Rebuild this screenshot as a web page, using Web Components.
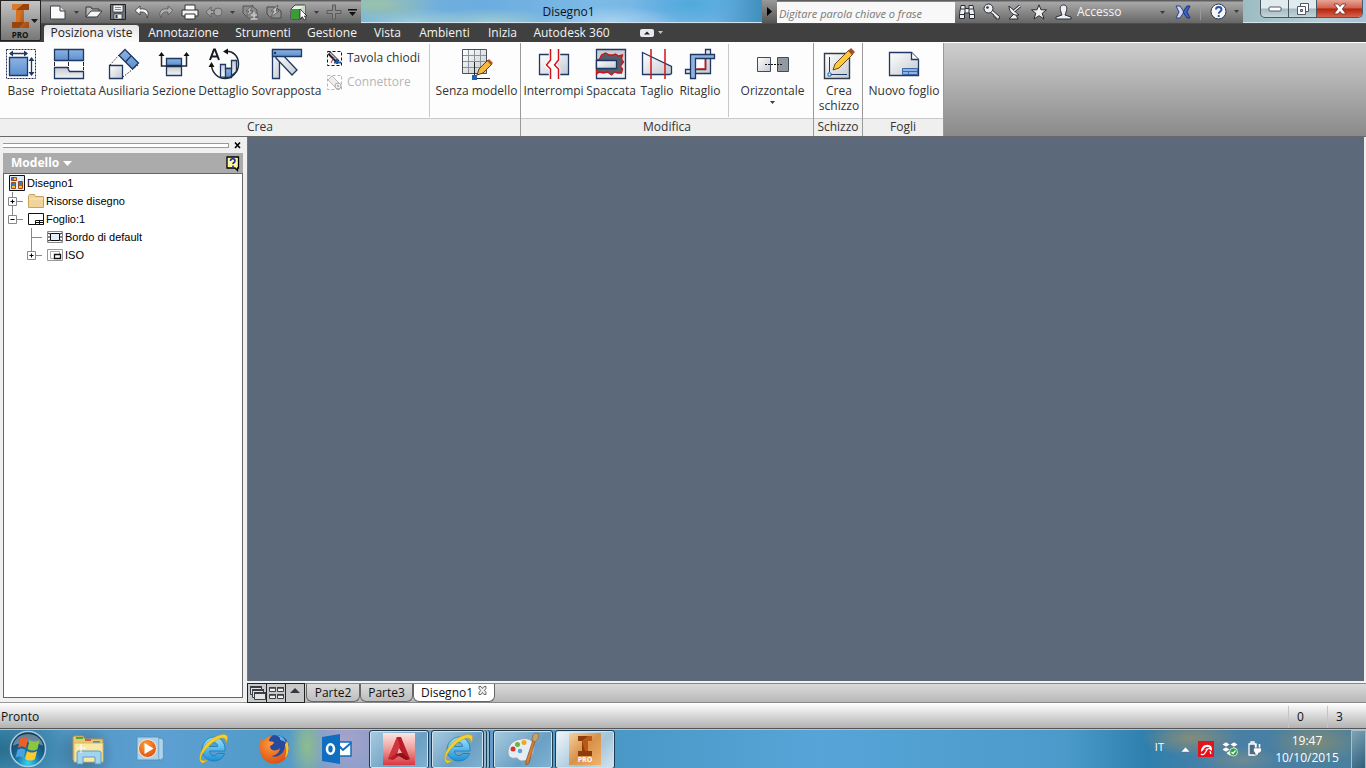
<!DOCTYPE html>
<html lang="it">
<head>
<meta charset="utf-8">
<title>Disegno1</title>
<style>
html, body { margin: 0; height: 100%; }
body { font: 12px/16px "Open Sans", "Noto Sans", sans-serif; color: #222; overflow: hidden; }
</style>
</head>
<body>
<app-shell></app-shell>
<script>
const defs = `<defs>
<linearGradient id="b" x1="0" y1="0" x2="0" y2="1"><stop offset="0" stop-color="#8db4e2"/><stop offset="1" stop-color="#5b8fcf"/></linearGradient>
<linearGradient id="g" x1="0" y1="0" x2="1" y2="1"><stop offset="0" stop-color="#fff"/><stop offset="1" stop-color="#c3c9d0"/></linearGradient>
<linearGradient id="h" x1="0" y1="0" x2="0" y2="1"><stop offset="0" stop-color="#c5c9ce"/><stop offset="1" stop-color="#f4f5f7"/></linearGradient>
<linearGradient id="o" x1="0" y1="0" x2="1" y2="1"><stop offset="0" stop-color="#e08a3a"/><stop offset="1" stop-color="#a5480c"/></linearGradient>
<radialGradient id="orb" cx=".5" cy=".9" r=".8"><stop offset="0" stop-color="#35d4f5"/><stop offset=".45" stop-color="#176f9f"/><stop offset="1" stop-color="#123c5c"/></radialGradient>
<radialGradient id="or" cx=".4" cy=".3" r=".8"><stop offset="0" stop-color="#ff9c3a"/><stop offset="1" stop-color="#d9480f"/></radialGradient>
<linearGradient id="ie" x1="0" y1="0" x2="0" y2="1"><stop offset="0" stop-color="#9be4fb"/><stop offset="1" stop-color="#1d8fd4"/></linearGradient>
<linearGradient id="red" x1="0" y1="0" x2="0" y2="1"><stop offset="0" stop-color="#fbe5e3"/><stop offset=".5" stop-color="#ee9d9b"/><stop offset="1" stop-color="#d8383f"/></linearGradient>
<linearGradient id="tan" x1="0" y1="0" x2="1" y2="1"><stop offset="0" stop-color="#f3d3a0"/><stop offset=".5" stop-color="#d9924a"/><stop offset="1" stop-color="#f3b26c"/></linearGradient>
</defs>`;
const N = 'stroke="#1f3864" stroke-width="1.3"';
const ink = 'fill="none" stroke="#222a38" stroke-width="1.5"';
const caret = c => [7, 4, `<path fill="${c}" d="M0 0h7L3.500 4z"/>`];
const ieArt = `<path d="M28 16c0-7-5-12-11-12S5 10 5 16.500 10 28 17 28c5 0 9-3 10.500-7.500h-7c-.8 1.400-2 2-3.600 2-2.600 0-4.200-1.600-4.400-4.500H28zM12.500 13.500c.4-2.400 1.900-4 4.200-4s3.700 1.600 3.900 4z" fill="url(#ie)" stroke="#1878b8" stroke-width=".8"/><path d="M5 30C-2 25 8 8 20 3c6-2.500 10-2 10.500 1 .3 1.800-.5 4-1.500 6 .2-4-1.500-6-6-4.500C14 9 4 20 4 25.500c0 2.500 3 2.800 6.500 1.500-2.500 2.500-4.500 3.400-5.500 3z" fill="#f5cf2e" stroke="#c79a12" stroke-width=".5"/>`;
const box = '<path d="M4.500 0v5M9 9.500h6" stroke="#888"/><path d="M.5 5.500h8v8h-8z" fill="#fff" stroke="#888"/><path d="M2.500 9.500h4" stroke="#000"/>';
const ICONS = {
 caretWhite: caret('#f2f2f2'), caretBlack: caret('#1a1a1a'),
 caretDark: [5, 3, '<path fill="#3c3c3c" d="M0 0h5L2.500 3z"/>'],
 caretBig: [9, 5, '<path fill="#fff" d="M0 0h9L4.500 5z"/>'],
 more: [9, 7, '<path d="M0 0h9v1.500H0zM1 3h7L4.500 7z" fill="#111"/>'],
 inventor: [26, 28, '<path d="M5 2h17v6h-5v12h5v6H5v-6h4V8H5z" fill="url(#o)"/><path d="M9 8l7-6h6v6zM9 20h8l-5 6H5v-6z" fill="#9a430d"/><path d="M9 8h4v12H9z" fill="#d9701e"/><path d="M5 2h11L9 8H5z" fill="#d57a2e"/>'],
 newDoc: [18, 16, '<path d="M1.500 2h9.500l5 5v8H1.500z" fill="#fafafa" stroke="#3a3f48"/><path d="M11 2v5h5" fill="#ddd" stroke="#3a3f48"/>'],
 open: [18, 16, '<path d="M1 13V3h5l1 2h7v2" fill="#b9b9b9" stroke="#33373f"/><path d="M1 13l5-6h11l-5 6z" fill="#f5f5f5" stroke="#33373f"/>'],
 save: [16, 16, '<path d="M.5.5h15v15H.5z" fill="#6c7480" stroke="#222"/><path d="M3 1h10v7H3zM4 10h8v5H4z" fill="#f2f2f2" stroke="#222" stroke-width=".7"/><path d="M5 3.500h6M5 5.500h6" stroke="#888"/><path d="M5.500 11h2v3h-2z" fill="#333"/>'],
 undo: [16, 16, '<path d="M6 2L1 6.500 6 11V8c5-.5 7 2 7 6 3-6 0-10-7-9z" fill="#f5f5f5" stroke="#333" stroke-width=".8"/>'],
 redo: [16, 16, '<path d="M10 2l5 4.500-5 4.500V8c-5-.5-7 2-7 6-3-6 0-10 7-9z" fill="#b0b0b0" stroke="#555" stroke-width=".8"/>'],
 print: [18, 16, '<path d="M4 1h10v6H4z" fill="#fff" stroke="#333"/><path d="M1 6h16v6H1z" fill="#f2f2f2" stroke="#333"/><path d="M4 10h10v5H4z" fill="#fff" stroke="#333"/>'],
 back: [18, 12, '<path d="M6 1L1 6l5 5V7.500h3v-3H6z" fill="#a4a4a4" stroke="#555" stroke-width=".7"/><circle cx="13" cy="6" r="4" fill="#a4a4a4" stroke="#555" stroke-width=".7"/>'],
 updA: [16, 16, '<path d="M1 2h9l5 4v8H6L1 9z" fill="#8c8c8c" stroke="#555"/><path d="M11 1L4 7h3l-3 6 7-6H8z" fill="#c4c4c4" stroke="#4a4a4a" stroke-width=".7"/><path d="M12 8v7M9 11h6M8.500 15h7" stroke="#c8c8c8" stroke-width="1.500"/>'],
 updB: [16, 16, '<path d="M1 3h8l6 4v7H5l-4-4z" fill="#8f8f8f" stroke="#4a4a4a"/><path d="M12 1L5 7h3l-3 6 8-6h-3z" fill="#c4c4c4" stroke="#4a4a4a" stroke-width=".7"/>'],
 cube: [17, 17, '<path d="M1 5l4-4h10v10l-4 4H1z" fill="#e6efe4" stroke="#39423a"/><path d="M1 5h9v10H1z" fill="#3b9b36"/><path d="M10 5l5-4v10l-5 4z" fill="#c9d8c7"/><path d="M10 5v10l2.300-2.300L14 16l2-1-1.500-3H17z" fill="#fff" stroke="#222" stroke-width=".8"/>'],
 plus: [16, 16, '<path d="M6.500 1h3v5.500H15v3H9.500V15h-3V9.500H1v-3h5.500z" fill="#8c8c8c" stroke="#5a5a5a"/>'],
 playBlack: [5, 9, '<path d="M0 0l5 4.500L0 9z" fill="#000"/>'],
 binoc: [16, 16, '<path d="M2 1.500h4v3h4v-3h4l1.500 8v5h-5V9h-5v5.500h-5v-5z" fill="#eceef2" stroke="#272b33"/><path d="M.5 10.500h5M10.500 10.500h5M6 5v4M10 5v4M2 5h4M10 5h4" stroke="#272b33"/>'],
 key: [17, 17, '<path d="M8 6l8.500 7.500-.5 2.500h-3v-2h-2v-2L7 9z" fill="#eceef2" stroke="#272b33"/><circle cx="5.500" cy="5.500" r="4.500" fill="#eceef2" stroke="#272b33"/><circle cx="4.500" cy="4.500" r="1.300" fill="#333"/>'],
 dish: [16, 16, '<path d="M7 10l-5 5h9l-2-4" fill="#f2f2f2" stroke="#272b33"/><path d="M2 2c0 6 4 10 10 9z" fill="#f2f2f2" stroke="#272b33"/><path d="M7 7l6-5" stroke="#272b33" stroke-width="3"/><path d="M7 7l6-5" stroke="#f2f2f2" stroke-width="1.300"/>'],
 star: [16, 16, '<path d="M8 .8l2 5h5.500l-4.300 3.500L13 15l-5-3.300L3 15l1.800-5.700L.5 5.800H6z" fill="#f1f2f4" stroke="#272b33"/>'],
 user: [17, 16, '<path d="M8.500 1C5 1 5 4 5.500 6.500S7 10 7 11l-6 2v2h15v-2l-6-2c0-1 1-2 1.500-4.500S12 1 8.500 1z" fill="#eef0f3" stroke="#272b33"/>'],
 exch: [16, 14, '<path d="M1 1h4l4 6-4 6H1l3-6z" fill="#d5daea" stroke="#26418c"/><path d="M15 1h-3L8 7l4 6h3l-3-6z" fill="#3563c9" stroke="#1c3479"/>'],
 help: [17, 17, '<circle cx="8.500" cy="8.500" r="7.500" fill="#f5f7fb" stroke="#30343c"/><path d="M6 6.500C6 3.200 11.500 3.200 11.500 6.500c0 2-2.800 1.900-2.800 4.300M8.700 12v2" fill="none" stroke="#2c4fae" stroke-width="1.900"/>'],
 min: [14, 8, '<rect x="1" y="2" width="12" height="4" rx="1" fill="#fff" stroke="#525866"/>'],
 restore: [14, 14, '<path d="M4.500 1.500h8v8h-8z" fill="#fff" stroke="#525866"/><path d="M1.500 4.500h8v8h-8z" fill="#fff" stroke="#525866"/><path d="M4.500 7.500h2v2h-2z" fill="#9bb" stroke="#525866"/>'],
 closeW: [14, 12, '<path d="M1 1h4l2 2.500L9 1h4L9.300 6l3.700 5H9L7 8.500 5 11H1l3.700-5z" fill="#fff" stroke="#6b3a3a" stroke-width=".9"/>'],
 pill: [14, 8, '<rect width="14" height="8" rx="2" fill="#e8e8f0"/><path d="M4 5.500h6L7 2.500z" fill="#222"/>'],
 base: [32, 32, `<path d="M1.500 1.500h29v29h-29z" fill="none" stroke="#222c48" stroke-dasharray="2 1"/><path d="M4.500 9.500h18v18h-18z" fill="url(#b)" ${N}/><path d="M5 5.500h17M26.500 10v17" ${N}/><path d="M4 5.500l4-3v6zM23 5.500l-4-3v6zM26.500 9l-3 4h6zM26.500 28l-3-4h6z" fill="#1f3864"/>`],
 proj: [32, 32, `<path d="M1.500 1.500h14v11h-14zM15.500 1.500h15v11h-15z" fill="url(#b)" ${N}/><path d="M1.500 19.500h13l2 4h14v7h-29z" fill="url(#h)" ${N}/><path d="M1.500 14v4M15.500 14v6M30.500 14v8" stroke="#222" stroke-dasharray="4 1"/>`],
 aux: [32, 32, `<path d="M11 7L2 17M30 17L15 29" stroke="#222" stroke-dasharray="1.500 1.500"/><path d="M17 1.500L30.500 15l-6 6L11 7.500z" fill="url(#b)" ${N}/><path d="M23 8l-5.500 6" ${N}/><path d="M1.500 17.500h13v13h-13z" fill="url(#g)" ${N}/>`],
 sect: [32, 32, `<path d="M8.500 10.500h15v7h-15z" fill="url(#b)" ${N}/><path d="M8.500 18.500h15v9h-15z" fill="url(#h)" ${N}/><path d="M3.500 6v12h25V6" ${ink}/><path d="M.5 8l3-4 3 4zM25.500 8l3-4 3 4z" fill="#111"/>`],
 detail: [32, 32, `<path d="M12.500 29V16.500h5v4h6v-8h5v11l-7 6z" fill="url(#h)" ${N}/><path d="M17.500 20.500h6v9h-6z" fill="url(#b)" ${N}/><path d="M17 3.500c8-1 13.500 4.500 13.500 12.500S24 30.500 17 30.500 4 25 3.500 17" ${ink}/><path d="M15 3.500l5-3v6zM3.500 14l-3 5h6z" fill="#111"/><path d="M2 12L6 1.500h1L11 12M3.500 8.500h6" fill="none" stroke="#161a22" stroke-width="2"/>`],
 over: [32, 32, `<path d="M1.500 2.500h7v28h-7z" fill="url(#g)" ${N}/><path d="M5 8l5-3 16 17-5 5L5 10z" fill="url(#g)" ${N}/><path d="M1.500 1.500h29v7h-29z" fill="url(#b)" ${N}/><circle cx="4" cy="5" r="1.200" fill="#1f3864"/>`],
 nails: [17, 17, '<path d="M1.500 1.500h14v14h-14z" fill="none" stroke="#111" stroke-dasharray="3 2"/><path d="M3 3l9 9" stroke="#222" stroke-width="4"/><path d="M4 3l7 7" stroke="#b9c6d8" stroke-width="1.500"/><path d="M8 7l-3 6" stroke="#c22"/><path d="M11 9v5M8 12.500h7" stroke="#1c57a8" stroke-width="2"/>'],
 conn: [17, 17, '<path d="M1.500 1.500h14v14h-14z" fill="none" stroke="#b5b5b5" stroke-dasharray="3 2"/><path d="M2 6l4-4 7 7-4 4z" fill="#eee" stroke="#bbb"/><circle cx="12" cy="12" r="3" fill="#eee" stroke="#aaa"/><circle cx="12" cy="12" r="1" fill="#aaa"/>'],
 grid: [32, 32, '<path d="M1.500 1.500h24v24h-24z" fill="url(#g)" stroke="#4b505a"/><path d="M7.500 2v23M13.500 2v23M19.500 2v23M2 7.500h23M2 13.500h23M2 19.500h23" stroke="#8c9198"/><path d="M13.500 14v14M15 30.500h14" stroke="#222"/><path d="M11 27h5v5h-5z" fill="#1c66b5"/><path d="M16 27l2-6 9-9 4 4-9 9z" fill="#f5b83c" stroke="#5b421c"/><path d="M26 13l2-2 4 4-2 2z" fill="#b0522c"/>'],
 brk: [32, 32, `<path d="M12.500 6.500h-11v20h11v-5l-4-4 4-5zM20.500 6.500h10v20h-10v-5l-4-4 4-5z" fill="url(#g)" ${N}/><path d="M12.500 1v11l-4 5 4 4v10M20.500 1v11l-4 5 4 4v10" fill="none" stroke="#fff" stroke-width="3.500"/><path d="M12.500 1v11l-4 5 4 4v10M20.500 1v11l-4 5 4 4v10" fill="none" stroke="#d3131b" stroke-width="1.500"/>`],
 brkout: [32, 32, `<path d="M1.500 1.500h29v29h-29z" fill="url(#h)" ${N}/><path d="M1.500 12l3-1 2-4 4-2 4 2 3 0 3-1 3 2 4-1-1 4 2 3-3 4 2 3-1 4-4 0-3-1-3 3-4-3-4 1-4-1-3 2z" fill="#555b67" stroke="#c9161d" stroke-width="1.300"/><path d="M1.500 12.500h20v8h-20z" fill="url(#g)" ${N}/>`],
 slice: [32, 32, `<path d="M1.500 4.500l29 14v7l-2 1h-27z" fill="url(#g)" ${N}/><path d="M10 1v30M24 1v30" stroke="#d3131b" stroke-width="1.500"/>`],
 crop: [32, 32, `<path d="M21.500 1.500h5v24h-25v-4h20z" fill="url(#g)" ${N}/><path d="M6.500 6.500h24v4h-19v20h-5z" fill="#8fb3de" ${N}/><path d="M21.500 11v10h-9" fill="none" stroke="#c9161d" stroke-width="1.700"/>`],
 horiz: [32, 32, '<path d="M.5 9.500h13v14H.5z" fill="url(#g)" stroke="#444b57"/><path d="M20.500 9.500h11v14h-11z" fill="#9299a2" stroke="#444b57"/><path d="M8 16.500h18" stroke="#111" stroke-dasharray="2 1"/>'],
 sketch: [32, 32, '<path d="M1.500 5.500h25v25h-25z" fill="url(#g)" stroke="#333b48" stroke-width="1.400"/><path d="M6.500 9v15M8 26.500h16" stroke="#1f3864"/><path d="M5 25h3v3H5z" fill="#fff" stroke="#1c66b5"/><path d="M10 22l2-6L26 2l4 4-14 14z" fill="#fbc93a" stroke="#6a4a12"/><path d="M25 3l3-3 4 4-3 3z" fill="#a34a35"/>'],
 sheet: [32, 32, `<path d="M1.500 4.500h22l7 7v16h-29z" fill="url(#g)" ${N}/><path d="M23.500 4.500v7h7" fill="#fff" ${N}/><path d="M14.500 20.500h15v6h-15zM14.500 23.500h15M20.500 23.500v3" fill="#8fb3de" stroke="#3b69ac"/>`],
 closeS: [8, 7, '<path d="M1 .5l5 5.500M6 .5L1 6" stroke="#000" stroke-width="1.600" fill="none"/>'],
 helpY: [14, 15, '<path d="M1 1h11.500v11h-1v2.500L9 12H1z" fill="#fbf6a0" stroke="#000" stroke-width="1.300"/><path d="M4.500 5c0-3 4.500-3 4.500 0 0 1.500-2 1.500-2 3M7 9.500V11" fill="none" stroke="#1a1f9c" stroke-width="1.600"/>'],
 tDoc: [16, 16, '<path d="M.5.5h15v15H.5z" fill="#dfeaf6" stroke="#111"/><path d="M2.500 2.500h5v3h-5z" fill="#3a7dc0" stroke="#a04416"/><path d="M2.500 7.500h4v6h-4zM9.500 6.500h4v7h-4z" fill="#3a7dc0" stroke="#a04416"/><path d="M3 11h3v2H3zM10 11h3v2h-3zM5 3h2v2H5z" fill="#f5c531"/>'],
 tFolder: [16, 16, '<path d="M.5 14.500v-12l1-1h5l1 2h8v11z" fill="#f0d49a" stroke="#c9a25c"/><path d="M1 6h14" stroke="#f9e8c2"/>'],
 tSheet: [16, 16, '<path d="M.5 2.500h15v11H.5z" fill="#fff" stroke="#111"/><path d="M7.500 9.500h8v4h-8zM7 11.500h8M11.500 10v4" stroke="#111" fill="#fff"/>'],
 tBorder: [16, 16, '<path d="M.5 2.500h15v11H.5z" fill="#fff" stroke="#888"/><path d="M3.500 4.500h9v7h-9z" fill="#e3eefa" stroke="#111"/><path d="M1 4l2 1M15 4l-2 1M1 12l2-1M15 12l-2-1M1 8h2M13 8h2" stroke="#111"/>'],
 tIso: [16, 16, '<path d="M.5 2.500h15v11H.5z" fill="#fff" stroke="#999"/><path d="M3.500 4.500h9v7h-9z" fill="#fff" stroke="#aaa"/><path d="M7.500 7.500h6v4h-6z" fill="#fff" stroke="#111" stroke-width="1.300"/>'],
 exPlus: [20, 18, box + '<path d="M4.500 7.500v4" stroke="#000"/>'],
 exPlusDown: [20, 18, box + '<path d="M4.500 7.500v4" stroke="#000"/><path d="M4.500 14v4" stroke="#888"/>'],
 exMinus: [20, 18, box],
 exLine: [20, 18, '<path d="M4.500 0v18M5 9.500h10" stroke="#888"/>'],
 cascade: [17, 16, ['M1.500 2.500h11v7h-11z', 'M3.500 5.500h11v7h-11z', 'M5.500 8.500h11v6h-11z'].map((d, i) => `<path d="${d}" fill="#e4e4e4" stroke="#3b4048"/><path d="M${1 + 2 * i} ${2 + 3 * i}h12" stroke="#3b4048" stroke-width="2"/>`).join('')],
 tile: [17, 16, '<path d="M1.500 2.500h6v4h-6zM9.500 2.500h6v4h-6zM1.500 9.500h6v4h-6zM9.500 9.500h6v4h-6z" fill="#eee" stroke="#3b4048"/><path d="M1 3h7M9 3h7M1 10h7M9 10h7" stroke="#3b4048" stroke-width="1.400"/>'],
 up: [10, 12, '<path d="M0 6h10L5 1z" fill="#333a42"/>'],
 closeTab: [9, 9, '<path d="M1 .5h2l1.500 2L6 .5h2v2L6.500 4.500 8 6.500v2H6l-1.500-2-1.500 2H1v-2l1.500-2L1 2.500z" fill="#eee" stroke="#666"/>'],
 orb: [38, 38, '<circle cx="19" cy="19" r="17.500" fill="url(#orb)" stroke="#a9c9dc" stroke-width="1.500"/><path d="M4 16C6 0 32 0 34 16c-9-5-21-5-30 0z" fill="#fff" opacity=".35"/><path d="M11 9c3-2 5-2 8 0l-2 9c-3-2-5-2-8 0z" fill="#e9602a"/><path d="M20.500 10c3 2 6 2 10 0l-2 9c-3 2-6 2-10 0z" fill="#8cc63e"/><path d="M8.500 20c3-2 5-2 8 0l-2 8c-3-2-5-2-8 0z" fill="#4aa3e0"/><path d="M18 21c3 2 6 2 10 0l-2 8c-3 2-6 2-10 0z" fill="#fccb2f"/>'],
 explorer: [34, 34, '<path d="M1 8V5l1-1h9l2 3h18v21H1z" fill="#e8c971" stroke="#b6914a"/><path d="M4 5h7v2H4z" fill="#4aa83c"/><path d="M13 7h6v2h-6z" fill="#d35a3a"/><path d="M21 9h7v2h-7z" fill="#3d9ad6"/><path d="M2 11h29v19H2z" fill="#f9e8a4" stroke="#cfae5a" stroke-width=".8"/><path d="M5 32V21q0-2 2-2h20q2 0 2 2v11h-6v-7H11v7z" fill="#a3d4ee" stroke="#5d9cc4"/><path d="M9 12v9M5 16h9" stroke="#fff"/>'],
 wmp: [30, 28, '<path d="M4 3h23v22H4z" fill="#86bfe2" stroke="#5b93b9"/><path d="M1 2h22v23H1z" fill="#a9d3ec" stroke="#5b93b9"/><path d="M24 4v20M26 5v18" stroke="#d5ecf8"/><circle cx="11.500" cy="13.500" r="9" fill="url(#or)" stroke="#fbe6d0"/><path d="M8.500 8l9 5.500-9 5.500z" fill="#fff"/>'],
 ie: [32, 32, ieArt],
 firefox: [32, 32, '<circle cx="17" cy="15" r="13" fill="#27499e"/><path d="M16 2c7 0 10 4 11 8-3-3-6-3-6-3s2-3-5-5z" fill="#5fb3e4"/><path d="M2 4c0 2 1 3 2 4 2-3 6-5 9-5-2 2-3 3-3 5l5 1c0 3-4 3-4 5 1 5 8 4 10 1-1 8-9 8-9 8 8 3 15-4 14-13 7 8 1 20-9 20.500C7 31 1 25 1 16 1 11 1 7 2 4z" fill="url(#or)"/><path d="M28 8c3 6 2 13-2 17 1-4 2-9 0-13z" fill="#fbc02d"/>'],
 outlook: [32, 32, '<path d="M14 9h16v14H14z" fill="#fff" stroke="#0f6ec0" stroke-width="1.500"/><path d="M15 10l7 7 8-7" fill="none" stroke="#0f6ec0" stroke-width="2"/><path d="M1 4l18-3v30L1 28z" fill="#0f6ec0"/><ellipse cx="9.500" cy="16" rx="3.500" ry="4.700" fill="none" stroke="#fff" stroke-width="2.600"/>'],
 acad: [32, 32, '<path d="M0 0h32v32H0z" fill="url(#red)"/><path d="M14 4h4l9 22-4 1-7-4-6 4-5-1z" fill="#b81c26"/><path d="M14 4l3 9-4 8-8 5z" fill="#d2343c"/><path d="M16 15l3 5-5 1z" fill="#efb4b0"/><path d="M12 21l7-1 8 6-4 1-7-4z" fill="#8e1019"/>'],
 paint: [32, 34, '<path d="M14 7c9-2 14 3 13 10-1 8-6 12-12 12-4 0-3-3-6-3-5 1-8-1-8-6C1 13 6 8 14 7z" fill="#e3edf3" stroke="#8da7b8"/><circle cx="6" cy="17" r="2.500" fill="#d9342b"/><circle cx="10.500" cy="12.500" r="2.500" fill="#6cb53a"/><circle cx="17" cy="10.500" r="2.500" fill="#f3a623"/><circle cx="13" cy="19" r="2.300" fill="#5ea3cf"/><path d="M26 8l2 1-6 22-3 2 0-4z" fill="#d6813a" stroke="#8c4c1c" stroke-width=".7"/><path d="M26 3l2-2 4 1-1 5-3 3-3-2z" fill="#c8a06a" stroke="#8c6a3c" stroke-width=".7"/>'],
 invBig: [32, 32, '<path d="M0 0h32v32H0z" fill="url(#tan)"/><path d="M9 3h14v5h-4v10h4v5H9v-5h4V8H9z" fill="#8f3d0a"/><path d="M13 8l6-5h4v5h-4v10h-3z" fill="#b85a16"/>'],
 chevUp: [9, 5, '<path d="M0 5h9L4.500 0z" fill="#fff" stroke="#456" stroke-width=".4"/>'],
 avira: [16, 16, '<path d="M0 0h16v16H0z" fill="#e2131b"/><path d="M3 11C3 5 8 2 13 5c1 2 1 3 1 5-2-2-4-2-5-1-2-1-4 0-6 2z" fill="#fff"/><path d="M5 10c1-4 4-5 7-3-3 0-5 1-7 3z" fill="#e2131b"/><path d="M9.500 8L7 12c-1 2-3 2-4 1M12 10l1 3" fill="none" stroke="#fff" stroke-width="1.300"/>'],
 dropbox: [17, 16, '<path d="M4 1l4 2.500L4 6 0 3.500zM12 1l4 2.500L12 6 8 3.500zM4 6l4 2.500L4 11 0 8.500zM12 6l4 2.500-4 2.500-4-2.500zM8 9.500l4 2.500-4 3-4-3z" fill="#fff" stroke="#456"  stroke-width=".4"/><circle cx="11.500" cy="11" r="4" fill="#2fa03c" stroke="#fff" stroke-width=".7"/><path d="M9.500 11l1.500 1.500 2.500-3" fill="none" stroke="#fff" stroke-width="1.200"/>'],
 plug: [16, 16, '<path d="M2 3h7v11H2zM4 1h3v2H4z" fill="#4b6c82" stroke="#fff" stroke-width="1.300"/><path d="M8.500 3v4M12.500 3v4" stroke="#fff" stroke-width="1.500"/><path d="M6.500 7h8v3l-2 2h-1v2H8v-2l-1.500-2z" fill="#fff" stroke="#345" stroke-width=".5"/>']
};

const make = (tag, css, html) => customElements.define(tag, class extends HTMLElement {
  connectedCallback() {
    if (this.shadowRoot) return;
    const t = document.createElement('template');
    t.innerHTML = `<style>*{box-sizing:border-box}button{font:inherit;color:inherit;background:none;border:0;padding:0;margin:0}${css}</style>` + (typeof html === 'function' ? html(this) : html);
    this.attachShadow({ mode: 'open' }).append(t.content.cloneNode(true));
  }
});

make('ui-icon', ':host{display:block;flex:none}svg{display:block;overflow:visible}', el => {
  const [w, h, art] = ICONS[el.getAttribute('name')];
  return `<svg width="${w}" height="${h}" viewBox="0 0 ${w} ${h}" aria-hidden="true">${defs}${art}</svg>`;
});

make('tool-button', ':host{display:block;flex:none;width:24px}:host([narrow]){width:12px}button{width:100%;height:24px;display:grid;place-items:center}',
  el => `<button type="button" aria-label="${el.getAttribute('label')}"><ui-icon name="${el.getAttribute('icon')}"></ui-icon></button>`);

make('window-controls', `:host{display:block;width:123px;padding-left:17px;background:linear-gradient(90deg,#9cbcc2,#b4cfd4 60%,#a4c4dc);border-bottom:1px solid #d5e4ea}
 div{display:flex;width:103px;height:18px;border:1px solid #4a5864;border-top:0;border-radius:0 0 5px 5px;overflow:hidden;background:linear-gradient(#e0ebee 0 48%,#a3bac2 52%,#c4d5da)}
 button{width:28px;display:grid;place-items:center;border-right:1px solid #4a5864}
 button:last-child{flex:1;border:0;background:linear-gradient(#e8a596,#d0604a 48%,#b5220c 52%,#d8624a)}`,
 `<div><button type="button" aria-label="Riduci"><ui-icon name="min"></ui-icon></button><button type="button" aria-label="Ripristina"><ui-icon name="restore"></ui-icon></button><button type="button" aria-label="Chiudi"><ui-icon name="closeW"></ui-icon></button></div>`);

make('title-bar', `:host{display:flex;height:24px;background:linear-gradient(#5e5e5e 0 1px,#a8a8a8 2px,#666);border-bottom:1px solid #4c4c4c}
 .qat{display:flex;width:320px;padding-left:5px}
 .title{flex:1;display:grid;place-items:center;padding:2px 0 0 14px;color:#111;border-bottom:1px solid #cfe2ee;
  background:radial-gradient(60px 16px at 4% 20%,#9cc2a8,transparent),radial-gradient(70px 14px at 32% 100%,#9dcbd0,transparent),radial-gradient(60px 14px at 13% 100%,#9dcbd6,transparent),radial-gradient(70px 16px at 62% 100%,#a8d2f0,transparent),radial-gradient(60px 20px at 82% 20%,#4faadc,transparent),linear-gradient(90deg,#7ab6d8,#6bace0 30%,#7cbae6 60%,#6db0e4 88%,#3f90bc)}
 .go{width:15px;display:grid;place-items:center;background:linear-gradient(#999,#555)}
 input{width:178px;height:21px;margin-top:2px;border:0;border-radius:0;padding:2px 2px 0;background:#f8f8f8;font:italic 11px/16px "Open Sans","Noto Sans",sans-serif;outline:0}
 input::placeholder{color:#777;opacity:1}
 .info{display:flex;align-items:center;width:288px}
 .login{width:96px;display:flex;align-items:center;justify-content:space-between;color:#f4f4f4;padding:1px 6px 0 2px}
 i{width:1px;height:16px;background:#999;margin:0 5px}`,
 `<nav class="qat" aria-label="Accesso rapido">${[['newDoc','Nuovo'],['caretDark','Altro',1],['open','Apri'],['save','Salva'],['undo','Annulla'],['redo','Ripeti'],['print','Stampa'],['back','Torna'],['caretDark','Altro',1],['updA','Aggiorna'],['updB','Aggiorna foglio'],['cube','Selezione'],['caretDark','Altro',1],['plus','Aggiungi'],['more','Personalizza',1]].map(a => `<tool-button icon="${a[0]}" label="${a[1]}" ${a[2] ? 'narrow' : ''}></tool-button>`).join('')}</nav>
 <div class="title"><span>Disegno1</span></div>
 <button type="button" class="go" aria-label="Mostra ricerca"><ui-icon name="playBlack"></ui-icon></button>
 <input type="text" aria-label="Ricerca" placeholder="Digitare parola chiave o frase">
 <div class="info"><tool-button icon="binoc" label="Cerca"></tool-button><tool-button icon="key" label="Abbonamento"></tool-button><tool-button icon="dish" label="Comunicazioni"></tool-button><tool-button icon="star" label="Preferiti"></tool-button><tool-button icon="user" label="Utente"></tool-button><button type="button" class="login"><span>Accesso</span><ui-icon name="caretDark"></ui-icon></button><tool-button icon="exch" label="Exchange"></tool-button><i></i><tool-button icon="help" label="Guida"></tool-button><tool-button icon="caretDark" label="Altro" narrow></tool-button></div>
 <window-controls></window-controls>`);

make('menu-tab', `:host{display:block;flex:none}button{width:100%;height:17px;color:#f4f4f4;line-height:15px;white-space:nowrap;display:flex;justify-content:center;align-items:flex-start}
 :host([active]) button{background:linear-gradient(#e4e4e4,#fdfdfd);color:#222;border-radius:3px 3px 0 0}`,
 '<button type="button" role="tab"><slot></slot></button>');

make('menu-bar', `:host{display:flex;background:#404040;height:18px;padding:1px 0 0 3px}.min{display:flex;align-items:center;gap:4px;margin:0 0 2px 22px}`,
 `${[['Posiziona viste',95],['Annotazione',89],['Strumenti',70],['Gestione',68],['Vista',43],['Ambienti',71],['Inizia',45],['Autodesk 360',93]].map((a, i) => `<menu-tab style="width:${a[1]}px" ${i ? '' : 'active'}>${a[0]}</menu-tab>`).join('')}<button type="button" class="min" aria-label="Riduci barra multifunzione"><ui-icon name="pill"></ui-icon><ui-icon name="caretDark" style="filter:invert(1)"></ui-icon></button>`);

make('app-menu', `:host{display:block;background:#404040}button{width:41px;height:41px;display:grid;grid-template-columns:30px 1fr;align-items:center;border:1px solid #222;border-radius:0 0 2px 0;background:linear-gradient(#c4c4c4,#777)}
 .logo{display:grid;justify-items:center;padding-left:6px}b{font-size:8px;line-height:9px;color:#111}`,
 '<button type="button" aria-label="Menu applicazione"><span class="logo"><ui-icon name="inventor"></ui-icon><b>PRO</b></span><ui-icon name="caretBlack"></ui-icon></button>');

make('ribbon-button', `:host{display:block;flex:none}button{width:100%;display:flex;flex-direction:column;align-items:center;text-align:center;white-space:nowrap;line-height:15px;color:#333}
 span{margin-top:3px}.m{margin-top:3px}`,
 el => `<button type="button"><ui-icon name="${el.getAttribute('icon')}"></ui-icon><span><slot></slot></span>${el.hasAttribute('menu') ? '<ui-icon class="m" name="caretDark"></ui-icon>' : ''}</button>`);

make('ribbon-small', `:host{display:block}button{display:flex;align-items:center;gap:4px;height:24px;color:#333;white-space:nowrap}button:disabled{color:#b5b5b5}`,
 el => `<button type="button" ${el.hasAttribute('off') ? 'disabled' : ''}><ui-icon name="${el.getAttribute('icon')}"></ui-icon><slot></slot></button>`);

make('ribbon-panel', `:host{display:grid;grid-template-rows:1fr 18px;background:#fdfdfd;border-right:1px solid #9a9a9a}
 .tools{display:flex;padding:5px 0 0 2px}footer{background:#efefef;border-top:1px solid #c8c8c8;text-align:center;line-height:16px;color:#333}`,
 el => `<div class="tools"><slot></slot></div><footer>${el.getAttribute('label')}</footer>`);

make('ribbon-bar', `:host{display:flex;height:95px;background:linear-gradient(#cecece,#8a8a8a);border-top:1px solid #fff;border-bottom:1px solid #686868}
 .col{width:102px;padding:0 0 0 3px;margin-top:-2px}i{width:1px;height:73px;margin:-4px 3px 0 4px;background:#c8c8c8}`,
 (() => { const b = (icon, w, t, x = '') => `<ribbon-button icon="${icon}" style="width:${w}px" ${x}>${t}</ribbon-button>`;
 return `<ribbon-panel label="Crea">${b('base',38,'Base')}${b('proj',57,'Proiettata')}${b('aux',54,'Ausiliaria')}${b('sect',46,'Sezione')}${b('detail',53,'Dettaglio')}${b('over',73,'Sovrapposta')}<div class="col"><ribbon-small icon="nails">Tavola chiodi</ribbon-small><ribbon-small icon="conn" off>Connettore</ribbon-small></div><i></i>${b('grid',87,'Senza modello')}</ribbon-panel>
 <ribbon-panel label="Modifica">${b('brk',61,'Interrompi')}${b('brkout',54,'Spaccata')}${b('slice',38,'Taglio')}${b('crop',48,'Ritaglio')}<i></i>${b('horiz',81,'Orizzontale','menu')}</ribbon-panel>
 <ribbon-panel label="Schizzo">${b('sketch',46,'Crea<br>schizzo')}</ribbon-panel>
 <ribbon-panel label="Fogli">${b('sheet',78,'Nuovo foglio')}</ribbon-panel>`; })());

make('tree-row', `:host{display:flex;align-items:center;height:18px;white-space:nowrap;color:#000}button{cursor:default}span{margin-left:2px}`,
 el => `${el.hasAttribute('twist') ? `<button type="button" aria-label="Espandi"><ui-icon name="${el.getAttribute('twist')}"></ui-icon></button>` : ''}<ui-icon name="${el.getAttribute('icon')}"></ui-icon><span><slot></slot></span>`);

make('model-browser', `:host{display:flex;flex-direction:column;width:247px;padding:6px 4px 4px 3px;background:#f0f0f0;border-bottom:1px solid #999;font:11px/16px "Liberation Sans",Tahoma,sans-serif}
 .grip{display:flex;align-items:center;gap:5px;height:5px;margin-bottom:5px}.grip span{width:226px;height:5px;border:1px solid #999;border-left:0;background:#fff}
 header{display:flex;align-items:center;justify-content:space-between;height:20px;background:#ababab;color:#fff;padding:0 3px 0 8px;width:240px}
 header button{display:flex;align-items:center;gap:4px;font:bold 12px/18px "Noto Sans","Open Sans",sans-serif}
 .box{flex:1;width:240px;border:1px solid #666;background:#fff}
 ul{list-style:none;margin:0;padding:0 0 0 4px}ul ul{padding-left:19px}.root{padding-left:5px}`,
 `<div class="grip"><span></span><button type="button" aria-label="Chiudi pannello"><ui-icon name="closeS"></ui-icon></button></div>
 <header><button type="button">Modello<ui-icon name="caretBig"></ui-icon></button><button type="button" aria-label="Guida"><ui-icon name="helpY"></ui-icon></button></header>
 <div class="box"><tree-row class="root" icon="tDoc">Disegno1</tree-row><ul><li><tree-row twist="exPlusDown" icon="tFolder">Risorse disegno</tree-row></li><li><tree-row twist="exMinus" icon="tSheet">Foglio:1</tree-row><ul><li><tree-row twist="exLine" icon="tBorder">Bordo di default</tree-row></li><li><tree-row twist="exPlus" icon="tIso">ISO</tree-row></li></ul></li></ul></div>`);

make('doc-tab', `:host{display:block;flex:none}button{width:100%;height:18px;display:flex;align-items:center;justify-content:center;gap:5px;color:#111;line-height:16px;background:linear-gradient(#dcdcdc,#bdbdbd);border:1px solid #666;border-top:0;border-radius:0 0 6px 6px;white-space:nowrap}
 :host([active]) button{background:#fff}ui-icon{margin-bottom:5px}`,
 el => `<button type="button" role="tab"><slot></slot>${el.hasAttribute('active') ? '<ui-icon name="closeTab"></ui-icon>' : ''}</button>`);

make('drawing-area', `:host{display:flex;flex-direction:column;min-width:0;padding-right:2px;background:#eee}
 main{flex:1;background:#5b697b;border-left:1px solid #777}
 footer{display:flex;height:22px;margin-right:-2px;border-top:2px solid #f2f2f2;border-bottom:1px solid #888;background:linear-gradient(#888 0 1px,#dadada 1px,#b8b8b8)}
 .v{width:20px;height:20px;border:1px solid #222;display:grid;place-items:center;background:#c8c8c8}.v+.v{margin-left:-1px}.tabs{display:flex;padding:1px 0 0 1px}`,
 `<main></main><footer><button type="button" class="v" aria-label="Sovrapponi"><ui-icon name="cascade"></ui-icon></button><button type="button" class="v" aria-label="Affianca"><ui-icon name="tile"></ui-icon></button><button type="button" class="v" aria-label="Elenco"><ui-icon name="up"></ui-icon></button><div class="tabs"><doc-tab style="width:54px">Parte2</doc-tab><doc-tab style="width:53px">Parte3</doc-tab><doc-tab style="width:82px" active>Disegno1</doc-tab></div></footer>`);

make('status-bar', `:host{display:flex;align-items:center;height:26px;padding:2px 0 0 1px;background:linear-gradient(#fff,#b2b2b2);color:#111;border-bottom:1px solid #555;box-sizing:border-box}
 span{flex:1}b{font-weight:400;width:39px;height:22px;line-height:22px;padding-left:8px;border-left:1px solid #c4c4c4}`,
 '<span>Pronto</span><b>0</b><b>3</b>');

make('task-button', `:host{display:block;flex:none;width:60px;height:39px}button{width:100%;height:39px;display:grid;place-items:center;position:relative}
 :host([open]) button{border:1px solid #1d3c50;border-radius:3px;box-shadow:inset 0 0 0 1px #cfe3ee;background:linear-gradient(135deg,#a9cbe0,#6ba0c4 60%,#7fb2d2)}
 :host([current]) button{background:linear-gradient(135deg,#f2f7fa,#a3c4da 60%,#d5e6f0)}
 :host([stack]) button{width:53px;box-shadow:inset 0 0 0 1px #cfe3ee,2px 0 0 #8fb9d2,3px 0 0 #1d3c50,5px 0 0 #8fb9d2,6px 0 0 #1d3c50}
 small{position:absolute;bottom:4px;left:0;right:0;font:bold 7px/8px "Open Sans",sans-serif;color:#fff;text-align:center}`,
 el => `<button type="button" aria-label="${el.getAttribute('label')}"><ui-icon name="${el.getAttribute('icon')}"></ui-icon>${el.hasAttribute('current') ? '<small>PRO</small>' : ''}</button>`);

make('task-bar', `:host{display:flex;height:39px;align-items:center;overflow:hidden;color:#fff;border-top:1px solid #a9c8d8;
  background:radial-gradient(80px 40px at 0 50%,#286f8f,transparent),radial-gradient(30px 30px at 85px 24px,#3f7090,transparent),radial-gradient(18px 40px at 307px 16px,#8cbd8c,transparent),radial-gradient(50px 50px at 345px 12px,#a9a3cc,transparent),radial-gradient(50px 18px at calc(100% - 175px) 8px,#858c78,transparent),radial-gradient(40px 14px at calc(100% - 125px) 30px,#6f8a92,transparent),radial-gradient(48px 22px at calc(100% - 50px) 12px,#7d8b78,transparent),linear-gradient(90deg,#4a93bd,#5d9fd2 12%,#4f9bc8 20%,#7f9cc8 27%,#4a98c6 45%,#57a5d8 60%,#4b9aca 78%,#2e7fae 84%,#4680a8 88%,#4a7f9e 100%)}
 .apps{display:flex;gap:2px;flex:1}
 .tray{display:flex;align-items:center;gap:8px}.ct{text-align:center;line-height:17px;width:72px}
 .desk{width:15px;height:39px;border:1px solid #a5c0cc;background:linear-gradient(135deg,#7fa5b5,#2e5f7c)}
 .lang{margin:0 9px 5px 0;font-size:11px}`,
 `<nav class="apps" aria-label="Applicazioni"><task-button style="width:55px;margin-right:2px" icon="orb" label="Start"></task-button>
 ${[['explorer','Esplora risorse',''],['wmp','Media Player',''],['ie','Internet Explorer',''],['firefox','Firefox',''],['outlook','Outlook',''],['acad','AutoCAD','open'],['ie','Internet Explorer','open stack'],['paint','Paint','open'],['invBig','Inventor','open current']].map(a => `<task-button icon="${a[0]}" label="${a[1]}" ${a[2]}></task-button>`).join('')}</nav>
 <div class="tray"><span class="lang">IT</span><ui-icon name="chevUp"></ui-icon><ui-icon name="avira"></ui-icon><ui-icon name="dropbox"></ui-icon><ui-icon name="plug"></ui-icon><div class="ct">19:47<br>10/10/2015</div><button type="button" class="desk" aria-label="Mostra desktop"></button></div>`);

make('app-shell', `:host{display:grid;grid-template-rows:auto auto 1fr auto auto;height:100vh;background:#f0f0f0}
 .top{display:grid;grid-template-columns:41px 1fr}.work{display:grid;grid-template-columns:247px 1fr;min-height:0}`,
 '<div class="top"><app-menu></app-menu><div><title-bar></title-bar><menu-bar></menu-bar></div></div><ribbon-bar></ribbon-bar><div class="work"><model-browser></model-browser><drawing-area></drawing-area></div><status-bar></status-bar><task-bar></task-bar>');
</script>
</body>
</html>
